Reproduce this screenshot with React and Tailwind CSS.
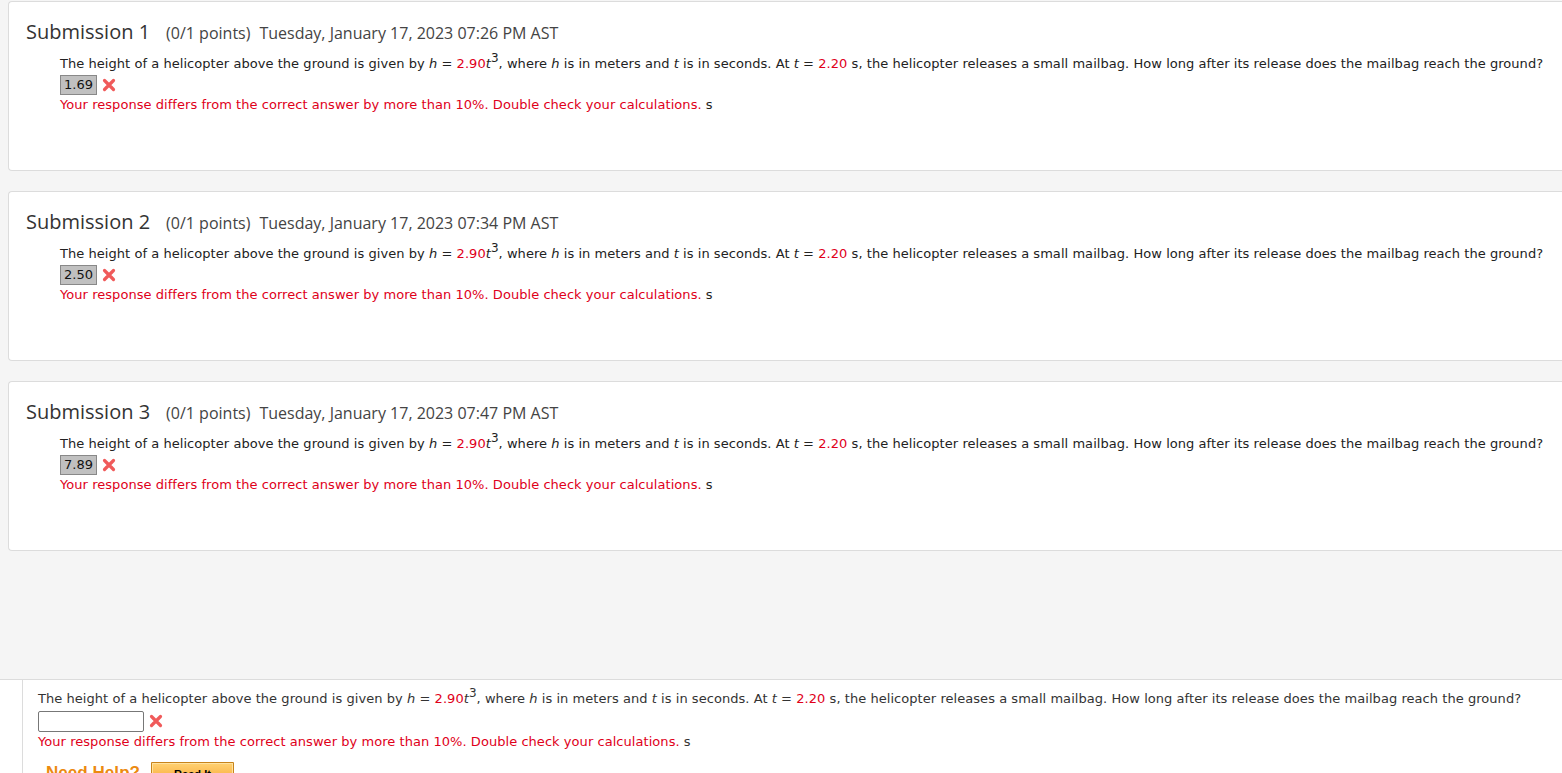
import React from "react";

function XMark() {
  return (
    <svg width="14" height="14" viewBox="0 0 14 14" className="inline-block">
      <path d="M2.5 2.5 L11.5 11.5 M11.5 2.5 L2.5 11.5" stroke="#f05a5a" strokeWidth="3.2" strokeLinecap="round" />
    </svg>
  );
}

function Question({ textColor = "text-[#222]" }) {
  return (
    <span className={textColor}>
      The height of a helicopter above the ground is given by <i>h</i> = <span className="text-[#e0001a]">2.90</span><i>t</i>
      <sup className="text-[12px]">3</sup>, where <i>h</i> is in meters and <i>t</i> is in seconds. At <i>t</i> ={" "}
      <span className="text-[#e0001a]">2.20</span> s, the helicopter releases a small mailbag. How long after its release does the mailbag reach the ground?
    </span>
  );
}

function Submission({ n, time, answer }) {
  return (
    <div className="ml-[8px] h-[170px] bg-white border border-[#dcdcdc] rounded-[4px] border-r-0 rounded-r-none pl-[17px] pt-[15px]">
      <div className="flex items-baseline text-[#333]" style={{ fontFamily: '"Open Sans", sans-serif' }}>
        <span className="text-[20px]">Submission {n}</span>
        <span className="text-[16px] ml-[16px] text-[#444]">(0/1 points)</span>
        <span className="text-[16px] ml-[9px] text-[#444]">Tuesday, January 17, 2023 {time} PM AST</span>
      </div>
      <div className="pl-[34px] mt-[7px] text-[13px] leading-[20px] tracking-[0.05px]" style={{ fontFamily: '"DejaVu Sans", Verdana, sans-serif' }}>
        <div><Question /></div>
        <div className="flex items-center gap-[5px] h-[21px]">
          <span className="inline-block bg-[#c0c0c0] border border-[#888] px-[3px] leading-[18px] text-[#111]">{answer}</span>
          <XMark />
        </div>
        <div className="text-[#e0001a]">
          Your response differs from the correct answer by more than 10%. Double check your calculations. <span className="text-[#222]">s</span>
        </div>
      </div>
    </div>
  );
}

export default function App() {
  return (
    <div className="w-[1562px] h-[773px] overflow-hidden bg-[#f5f5f5] flex flex-col" style={{ fontFamily: '"DejaVu Sans", sans-serif' }}>
      <div className="pt-[1px] flex flex-col gap-[20px]">
        <Submission n={1} time="07:26" answer="1.69" />
        <Submission n={2} time="07:34" answer="2.50" />
        <Submission n={3} time="07:47" answer="7.89" />
      </div>
      <div className="mt-[128px] flex-1 bg-white border-t border-[#dcdcdc] flex">
        <div className="w-[23px] border-r border-[#dcdcdc]"></div>
        <div className="pl-[15px] pt-[9px] text-[13px] leading-[20px] tracking-[0.05px]" style={{ fontFamily: '"DejaVu Sans", Verdana, sans-serif' }}>
          <div><Question textColor="text-[#333]" /></div>
          <div className="flex items-center gap-[5px] mt-[1px] h-[22px]">
            <div className="w-[106px] h-[21px] border border-[#777] rounded-[2px] bg-white"></div>
            <XMark />
          </div>
          <div className="text-[#e0001a]">
            Your response differs from the correct answer by more than 10%. Double check your calculations. <span className="text-[#333]">s</span>
          </div>
          <div className="flex items-start mt-[9px] ml-[8px] h-[40px]">
            <span className="text-[#ec8a10] text-[17px] font-bold leading-[24px]" style={{ fontFamily: '"Liberation Sans", Arial, sans-serif' }}>Need Help?</span>
            <div className="ml-[11px] mt-[1px] w-[83px] h-[24px] p-[1px] bg-[#c8841a] rounded-[1px]">
              <div className="w-full h-full bg-gradient-to-b from-[#ffcf6e] to-[#f7a52a] border border-[#ffe2a0] text-[11px] font-bold text-center leading-[20px] text-black" style={{ fontFamily: '"Liberation Sans", Arial, sans-serif' }}>Read It</div>
            </div>
          </div>
        </div>
      </div>
    </div>
  );
}
